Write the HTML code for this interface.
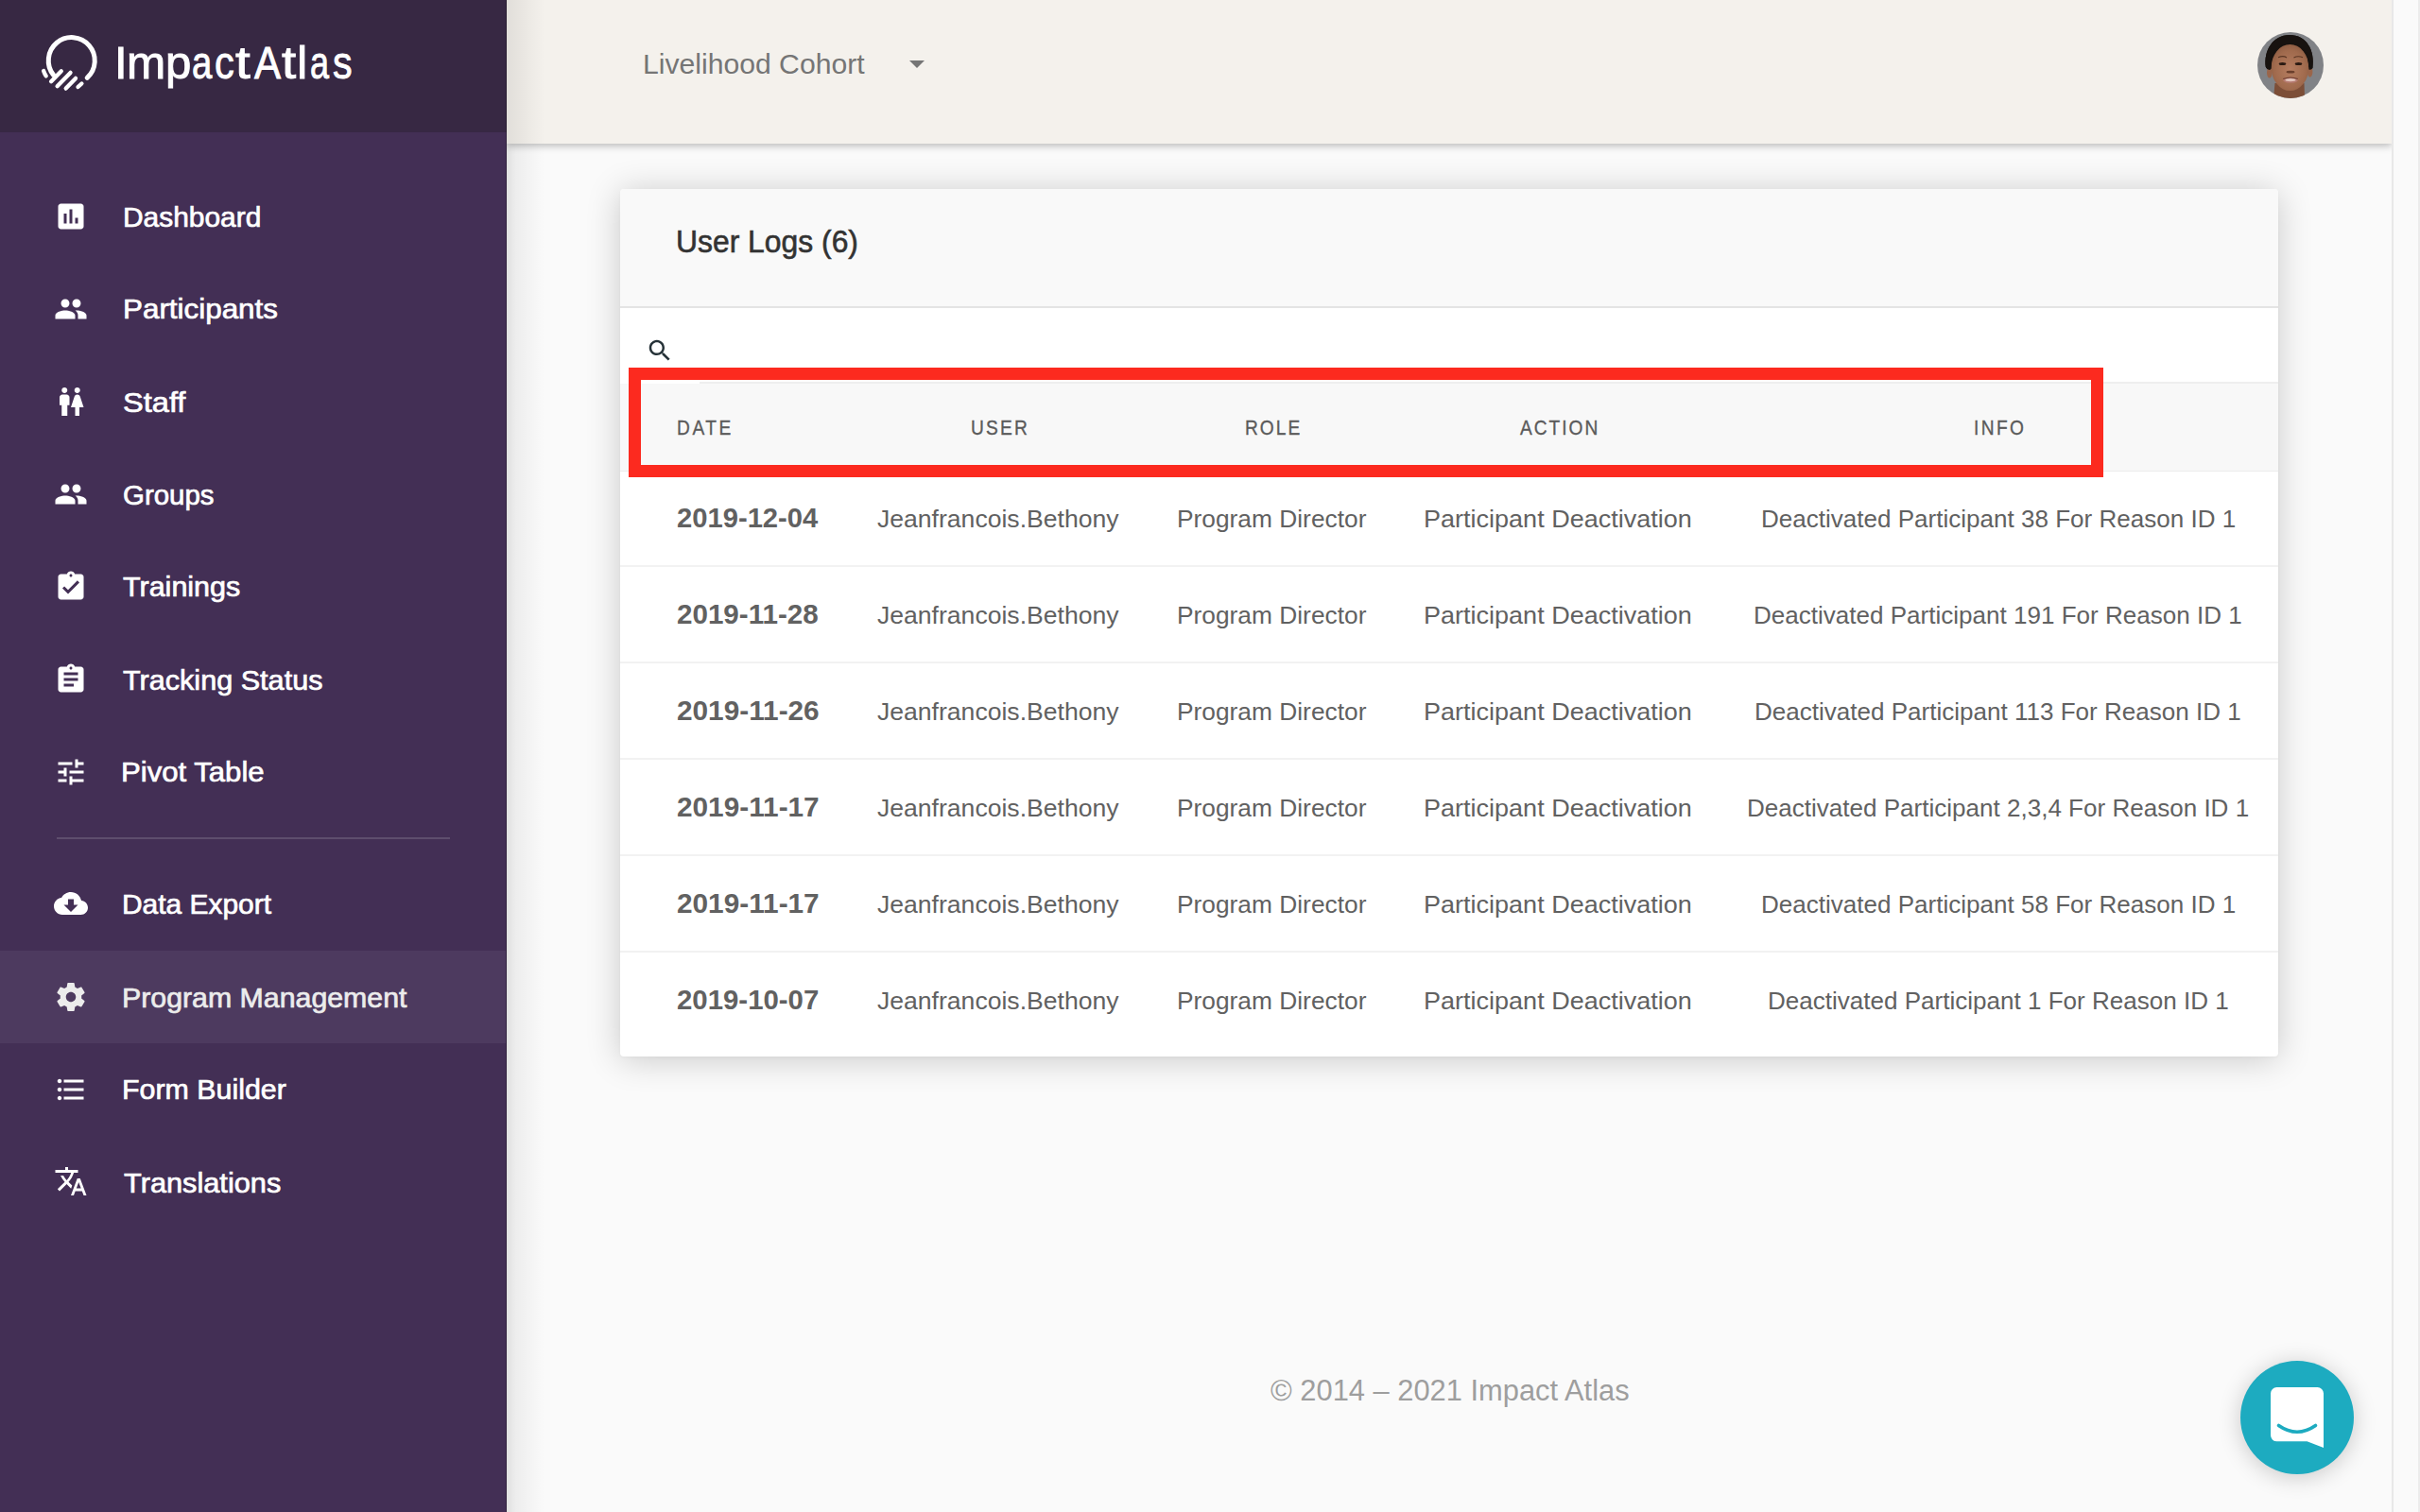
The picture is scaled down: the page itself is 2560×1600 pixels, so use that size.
<!DOCTYPE html>
<html><head><meta charset="utf-8"><title>User Logs</title>
<style>
html,body{margin:0;padding:0;width:2560px;height:1600px;overflow:hidden;background:#fafafa;font-family:"Liberation Sans",sans-serif;}
.a{position:absolute;}
.t{position:absolute;white-space:nowrap;line-height:0;transform-origin:0 0;font-family:"Liberation Sans",sans-serif;}
.ic{position:absolute;left:57px;width:36px;height:36px;}
.ic path{fill:#fff;}
</style></head><body>
<!-- main bg shadow from sidebar -->
<div class="a" style="left:536px;top:0;width:40px;height:1600px;background:linear-gradient(to right,rgba(0,0,0,0.10),rgba(0,0,0,0.05) 25%,rgba(0,0,0,0) 100%);"></div>
<!-- top bar -->
<div class="a" style="left:536px;top:0;width:1994px;height:152px;background:#f4f1ec;box-shadow:0 2px 8px rgba(0,0,0,0.28);"></div>
<div class="a" style="left:536px;top:0;width:40px;height:152px;background:linear-gradient(to right,rgba(0,0,0,0.08),rgba(0,0,0,0) 100%);"></div>
<!-- scrollbar track -->
<div class="a" style="left:2530px;top:0;width:30px;height:1600px;background:#fafafa;border-left:2px solid #e8e8e8;box-sizing:border-box;"></div>
<div class="a" style="left:2558px;top:0;width:2px;height:1600px;background:#ececec;"></div>

<!-- sidebar -->
<div class="a" style="left:0;top:0;width:536px;height:1600px;background:#432f55;"></div>
<div class="a" style="left:0;top:0;width:536px;height:140px;background:#372843;"></div>
<div class="a" style="left:535px;top:0;width:1px;height:1600px;background:rgba(0,0,0,0.25);"></div>
<div class="a" style="left:0;top:1006px;width:535px;height:98px;background:#4d3a5f;"></div>
<div class="a" style="left:60px;top:886px;width:416px;height:2px;background:#5e4e6d;"></div>

<!-- logo -->
<svg class="a" style="left:0;top:0" width="140" height="120" viewBox="0 0 140 120">
 <g fill="none" stroke="#fff" stroke-linecap="round">
  <path d="M56.6 79.4 A24.5 24.5 0 1 1 92.2 82.3" stroke-width="5"/>
  <path d="M46.1 74.9 A31.8 31.8 0 0 0 48.7 80.4" stroke-width="4.3"/>
  <path d="M54.1 86.2 L64.8 75.2" stroke-width="4.3"/>
  <path d="M60.6 91.2 L74.5 76.9" stroke-width="4.3"/>
  <path d="M69.7 93.6 L80 82.9" stroke-width="4.3"/>
  <path d="M82.5 92 L86.4 88.5" stroke-width="4.3"/>
 </g>
</svg>

<!-- sidebar icons -->
<svg class="ic" style="top:210.5px" viewBox="0 0 24 24"><path d="M19 3H5c-1.1 0-2 .9-2 2v14c0 1.1.9 2 2 2h14c1.1 0 2-.9 2-2V5c0-1.1-.9-2-2-2zM9 17H7v-7h2v7zm4 0h-2V7h2v10zm4 0h-2v-4h2v4z"/></svg>
<svg class="ic" style="top:308.5px" viewBox="0 0 24 24"><path d="M16 11c1.66 0 2.99-1.34 2.99-3S17.66 5 16 5c-1.66 0-3 1.34-3 3s1.34 3 3 3zm-8 0c1.66 0 2.99-1.34 2.99-3S9.66 5 8 5C6.34 5 5 6.34 5 8s1.34 3 3 3zm0 2c-2.33 0-7 1.17-7 3.5V19h14v-2.5c0-2.33-4.67-3.5-7-3.5zm8 0c-.29 0-.62.02-.97.05 1.16.84 1.97 1.97 1.97 3.45V19h6v-2.5c0-2.33-4.67-3.5-7-3.5z"/></svg>
<svg class="ic" style="top:406.5px" viewBox="0 0 24 24"><path d="M5.5 22v-7.5H4V9c0-1.1.9-2 2-2h3c1.1 0 2 .9 2 2v5.5H9.5V22h-4zM18 22v-6h3l-2.54-7.63C18.18 7.55 17.42 7 16.56 7h-.12c-.86 0-1.63.55-1.9 1.37L12 16h3v6h3zM7.5 6c1.11 0 2-.89 2-2s-.89-2-2-2-2 .89-2 2 .89 2 2 2zm9 0c1.11 0 2-.89 2-2s-.89-2-2-2-2 .89-2 2 .89 2 2 2z"/></svg>
<svg class="ic" style="top:504.5px" viewBox="0 0 24 24"><path d="M16 11c1.66 0 2.99-1.34 2.99-3S17.66 5 16 5c-1.66 0-3 1.34-3 3s1.34 3 3 3zm-8 0c1.66 0 2.99-1.34 2.99-3S9.66 5 8 5C6.34 5 5 6.34 5 8s1.34 3 3 3zm0 2c-2.33 0-7 1.17-7 3.5V19h14v-2.5c0-2.33-4.67-3.5-7-3.5zm8 0c-.29 0-.62.02-.97.05 1.160.84 1.97 1.97 1.97 3.45V19h6v-2.5c0-2.33-4.67-3.5-7-3.5z"/></svg>
<svg class="ic" style="top:602.5px" viewBox="0 0 24 24"><path d="M19 3h-4.18C14.4 1.84 13.3 1 12 1c-1.3 0-2.4.84-2.82 2H5c-1.1 0-2 .9-2 2v14c0 1.1.9 2 2 2h14c1.1 0 2-.9 2-2V5c0-1.1-.9-2-2-2zm-7 0c.55 0 1 .45 1 1s-.45 1-1 1-1-.45-1-1 .45-1 1-1zm-2 14l-4-4 1.41-1.41L10 14.17l6.59-6.59L18 9l-8 8z"/></svg>
<svg class="ic" style="top:700.5px" viewBox="0 0 24 24"><path d="M19 3h-4.18C14.4 1.84 13.3 1 12 1c-1.3 0-2.4.84-2.82 2H5c-1.1 0-2 .9-2 2v14c0 1.1.9 2 2 2h14c1.1 0 2-.9 2-2V5c0-1.1-.9-2-2-2zm-7 0c.55 0 1 .45 1 1s-.45 1-1 1-1-.45-1-1 .45-1 1-1zm2 14H7v-2h7v2zm3-4H7v-2h10v2zm0-4H7V7h10v2z"/></svg>
<svg class="ic" style="top:798.5px" viewBox="0 0 24 24"><path d="M3 17v2h6v-2H3zM3 5v2h10V5H3zm10 16v-2h8v-2h-8v-2h-2v6h2zM7 9v2H3v2h4v2h2V9H7zm14 4v-2H11v2h10zm-6-4h2V7h4V5h-4V3h-2v6z"/></svg>
<svg class="ic" style="top:938px" viewBox="0 0 24 24"><path d="M19.35 10.04C18.67 6.59 15.64 4 12 4 9.11 4 6.6 5.64 5.35 8.04 2.34 8.36 0 10.91 0 14c0 3.31 2.690 6 6 6h13c2.76 0 5-2.24 5-5 0-2.64-2.05-4.78-4.65-4.960zM17 13l-5 5-5-5h3V9h4v4h3z"/></svg>
<svg class="ic" style="top:1036.5px" viewBox="0 0 24 24"><path style="fill:#ececec" d="M19.43 12.98c.04-.32.07-.64.07-.98s-.03-.66-.07-.98l2.11-1.65c.19-.15.24-.42.12-.64l-2-3.46c-.12-.22-.39-.3-.61-.22l-2.49 1c-.52-.4-1.08-.73-1.69-.98l-.38-2.65C14.46 2.18 14.25 2 14 2h-4c-.25 0-.46.18-.49.42l-.38 2.65c-.61.25-1.17.59-1.69.98l-2.49-1c-.23-.09-.49 0-.61.22l-2 3.46c-.13.22-.07.49.12.64l2.11 1.65c-.04.32-.07.65-.07.98s.03.66.07.98l-2.11 1.65c-.19.15-.24.42-.12.64l2 3.46c.12.22.39.3.61.22l2.49-1c.52.4 1.08.73 1.69.98l.38 2.65c.03.24.24.42.49.42h4c.25 0 .46-.18.49-.42l.38-2.65c.61-.25 1.17-.59 1.69-.98l2.49 1c.23.09.49 0 .61-.22l2-3.46c.12-.22.07-.49-.12-.64l-2.11-1.65zM12 15.5c-1.93 0-3.5-1.57-3.5-3.5s1.57-3.5 3.5-3.5 3.5 1.57 3.5 3.5-1.57 3.5-3.5 3.5z"/></svg>
<svg class="ic" style="top:1134.5px" viewBox="0 0 24 24"><path d="M4 10.5c-.83 0-1.5.67-1.5 1.5s.67 1.5 1.5 1.5 1.5-.67 1.5-1.5-.67-1.5-1.5-1.5zm0-6c-.83 0-1.5.67-1.5 1.5S3.17 7.5 4 7.5 5.5 6.83 5.5 6 4.83 4.5 4 4.5zm0 12c-.83 0-1.5.68-1.5 1.5s.68 1.5 1.5 1.5 1.5-.68 1.5-1.5-.67-1.5-1.5-1.5zM7 19h14v-2H7v2zm0-6h14v-2H7v2zm0-8v2h14V5H7z"/></svg>
<svg class="ic" style="top:1232px" viewBox="0 0 24 24"><path d="M12.87 15.07l-2.54-2.51.03-.03c1.74-1.94 2.98-4.170 3.71-6.53H17V4h-7V2H8v2H1v1.99h11.17C11.5 7.92 10.44 9.75 9 11.35 8.07 10.32 7.3 9.19 6.69 8h-2c.73 1.63 1.73 3.17 2.98 4.56l-5.09 5.02L4 19l5-5 3.11 3.11.76-2.04zM18.5 10h-2L12 22h2l1.12-3h4.75L21 22h2l-4.5-12zm-2.62 7l1.62-4.33L19.12 17h-3.24z"/></svg>

<!-- dropdown arrow -->
<svg class="a" style="left:960px;top:62px" width="20" height="12" viewBox="0 0 20 12"><path d="M2 2 L18 2 L10 10 Z" fill="#757575"/></svg>

<!-- avatar -->
<svg class="a" style="left:2388px;top:34px" width="70" height="70" viewBox="0 0 70 70">
 <defs><clipPath id="cav"><circle cx="35" cy="35" r="35"/></clipPath>
 <radialGradient id="skin" cx="0.5" cy="0.55" r="0.6"><stop offset="0" stop-color="#b57d60"/><stop offset="0.7" stop-color="#a06a4d"/><stop offset="1" stop-color="#8a5a40"/></radialGradient></defs>
 <g clip-path="url(#cav)">
  <rect width="70" height="70" fill="#808286"/>
  <path d="M8.8 37 C6.5 20 16 3 34 3 C52 3 61 19 58.4 38 Q57 40.5 54.4 39.5 L14 39.5 Q11 41 8.8 37 Z" fill="#17120f"/>
  <path d="M17 71 L18.5 54 L49.5 54 L50 71 Z" fill="#7c4e37"/>
  <ellipse cx="12.8" cy="43" rx="2.8" ry="5.5" fill="#9a654a"/>
  <ellipse cx="55.6" cy="42" rx="2.8" ry="5.5" fill="#9a654a"/>
  <ellipse cx="34.5" cy="37.5" rx="19.8" ry="24.5" fill="url(#skin)"/>
  <path d="M8.8 37 C6.5 20 16 3 34 3 C52 3 61 19 58.4 38 Q57 40.5 54.4 39.5 C54 31 53 25 51 21 C47 15 41 12.6 34 12.6 C27 12.6 21 15 18 21 C16 25 14.5 31 14 39.5 Q11 41 8.8 37 Z" fill="#17120f"/>
  <path d="M22 26.8 C25 25.5 29 25.7 31 27 M38.5 27 C41 25.7 45 25.5 48 26.8" stroke="#5a3624" stroke-width="1.2" fill="none"/>
  <ellipse cx="26.5" cy="33.4" rx="3.8" ry="1.5" fill="#2a1a12"/>
  <ellipse cx="43.5" cy="33.4" rx="3.8" ry="1.5" fill="#2a1a12"/>
  <ellipse cx="35" cy="42.2" rx="4.5" ry="1.4" fill="#6a3f2c"/>
  <ellipse cx="35" cy="50.8" rx="7.8" ry="3" fill="#b57a70"/>
  <ellipse cx="35" cy="50.6" rx="5.6" ry="1.6" fill="#e2c4bc"/>
  <path d="M27.2 49.6 Q35 46.3 42.8 49.6" stroke="#6e3e30" stroke-width="1.1" fill="none"/>
 </g>
</svg>

<!-- card -->
<div class="a" style="left:656px;top:200px;width:1754px;height:918px;background:#fff;border-radius:4px;box-shadow:0 3px 36px rgba(0,0,0,0.2),0 1px 3px rgba(0,0,0,0.03);overflow:hidden;">
  <div class="a" style="left:0;top:0;width:1754px;height:124px;background:#f9f9f9;border-bottom:2px solid #e4e4e4;"></div>
  <div class="a" style="left:84px;top:204px;width:1670px;height:2px;background:#eeeeee;"></div>
  <div class="a" style="left:0;top:206px;width:1754px;height:92px;background:#f8f8f8;border-bottom:1px solid #ececec;"></div>
  <div class="a" style="left:0;top:398px;width:1754px;height:2px;background:#f2f2f2;"></div>
  <div class="a" style="left:0;top:500px;width:1754px;height:2px;background:#f2f2f2;"></div>
  <div class="a" style="left:0;top:602px;width:1754px;height:2px;background:#f2f2f2;"></div>
  <div class="a" style="left:0;top:704px;width:1754px;height:2px;background:#f2f2f2;"></div>
  <div class="a" style="left:0;top:806px;width:1754px;height:2px;background:#f2f2f2;"></div>
</div>
<!-- search icon -->
<svg class="a" style="left:683px;top:355.5px" width="30" height="30" viewBox="0 0 24 24"><path fill="#263238" d="M15.5 14h-.79l-.28-.27C15.41 12.59 16 11.11 16 9.5 16 5.91 13.09 3 9.5 3S3 5.91 3 9.5 5.91 16 9.5 16c1.61 0 3.09-.59 4.23-1.57l.27.28v.79l5 4.99L20.49 19l-4.99-5zm-6 0C7.01 14 5 11.99 5 9.5S7.01 5 9.5 5 14 7.01 14 9.5 11.99 14 9.5 14z"/></svg>

<div class="t" style="left:120.95px;top:65.62px;font-size:49px;font-weight:400;color:#ffffff;-webkit-text-stroke:0.9px currentColor;">I</div>
<div class="t" style="left:134.17px;top:65.62px;font-size:49px;font-weight:400;color:#ffffff;transform:scaleX(1.0086);-webkit-text-stroke:0.9px currentColor;">m</div>
<div class="t" style="left:175.29px;top:65.62px;font-size:49px;font-weight:400;color:#ffffff;transform:scaleX(1.0043);-webkit-text-stroke:0.9px currentColor;">p</div>
<div class="t" style="left:202.74px;top:65.62px;font-size:49px;font-weight:400;color:#ffffff;transform:scaleX(0.7808);-webkit-text-stroke:0.9px currentColor;">a</div>
<div class="t" style="left:226.91px;top:65.62px;font-size:49px;font-weight:400;color:#ffffff;transform:scaleX(0.8455);-webkit-text-stroke:0.9px currentColor;">c</div>
<div class="t" style="left:248.90px;top:65.62px;font-size:49px;font-weight:400;color:#ffffff;transform:scaleX(1.1571);-webkit-text-stroke:0.9px currentColor;">t</div>
<div class="t" style="left:268.60px;top:65.62px;font-size:49px;font-weight:400;color:#ffffff;transform:scaleX(0.8576);-webkit-text-stroke:0.9px currentColor;">A</div>
<div class="t" style="left:297.50px;top:65.62px;font-size:49px;font-weight:400;color:#ffffff;transform:scaleX(1.1143);-webkit-text-stroke:0.9px currentColor;">t</div>
<div class="t" style="left:314.25px;top:65.62px;font-size:49px;font-weight:400;color:#ffffff;-webkit-text-stroke:0.9px currentColor;">l</div>
<div class="t" style="left:327.83px;top:65.62px;font-size:49px;font-weight:400;color:#ffffff;transform:scaleX(0.7346);-webkit-text-stroke:0.9px currentColor;">a</div>
<div class="t" style="left:351.66px;top:65.62px;font-size:49px;font-weight:400;color:#ffffff;transform:scaleX(0.8409);-webkit-text-stroke:0.9px currentColor;">s</div>
<div class="t" style="left:129.63px;top:229.50px;font-size:30.3px;font-weight:400;color:#ffffff;transform:scaleX(0.9869);-webkit-text-stroke:0.7px currentColor;">Dashboard</div>
<div class="t" style="left:129.53px;top:327.30px;font-size:30.3px;font-weight:400;color:#ffffff;transform:scaleX(1.0359);-webkit-text-stroke:0.7px currentColor;">Participants</div>
<div class="t" style="left:130.02px;top:425.50px;font-size:30.3px;font-weight:400;color:#ffffff;transform:scaleX(1.0754);-webkit-text-stroke:0.7px currentColor;">Staff</div>
<div class="t" style="left:129.93px;top:523.50px;font-size:30.3px;font-weight:400;color:#ffffff;transform:scaleX(0.9714);-webkit-text-stroke:0.7px currentColor;">Groups</div>
<div class="t" style="left:130.30px;top:621.30px;font-size:30.3px;font-weight:400;color:#ffffff;transform:scaleX(1.0065);-webkit-text-stroke:0.7px currentColor;">Trainings</div>
<div class="t" style="left:130.30px;top:719.80px;font-size:30.3px;font-weight:400;color:#ffffff;transform:scaleX(1.0100);-webkit-text-stroke:0.7px currentColor;">Tracking Status</div>
<div class="t" style="left:128.25px;top:817.30px;font-size:30.3px;font-weight:400;color:#ffffff;transform:scaleX(1.0269);-webkit-text-stroke:0.7px currentColor;">Pivot Table</div>
<div class="t" style="left:129.12px;top:957.30px;font-size:30.3px;font-weight:400;color:#ffffff;transform:scaleX(0.9880);-webkit-text-stroke:0.7px currentColor;">Data Export</div>
<div class="t" style="left:129.00px;top:1055.90px;font-size:30.3px;font-weight:400;color:#ececec;-webkit-text-stroke:0.7px currentColor;">Program Management</div>
<div class="t" style="left:129.00px;top:1153.30px;font-size:30.3px;font-weight:400;color:#ffffff;transform:scaleX(1.0023);-webkit-text-stroke:0.7px currentColor;">Form Builder</div>
<div class="t" style="left:131.00px;top:1251.70px;font-size:30.3px;font-weight:400;color:#ffffff;transform:scaleX(1.0147);-webkit-text-stroke:0.7px currentColor;">Translations</div>
<div class="t" style="left:680.21px;top:67.50px;font-size:30.3px;font-weight:400;color:#757575;transform:scaleX(0.9949);">Livelihood Cohort</div>
<div class="t" style="left:715.34px;top:256.40px;font-size:32.6px;font-weight:400;color:#333333;transform:scaleX(0.9778);-webkit-text-stroke:0.6px currentColor;">User Logs (6)</div>
<div class="t" style="left:716.43px;top:452.98px;font-size:22px;font-weight:400;color:#5b5b5b;transform:scaleX(0.8700);letter-spacing:2.969px;-webkit-text-stroke:0.35px currentColor;">DATE</div>
<div class="t" style="left:1026.53px;top:452.98px;font-size:22px;font-weight:400;color:#5b5b5b;transform:scaleX(0.8700);letter-spacing:2.556px;-webkit-text-stroke:0.35px currentColor;">USER</div>
<div class="t" style="left:1316.93px;top:452.98px;font-size:22px;font-weight:400;color:#5b5b5b;transform:scaleX(0.8700);letter-spacing:2.314px;-webkit-text-stroke:0.35px currentColor;">ROLE</div>
<div class="t" style="left:1607.50px;top:452.98px;font-size:22px;font-weight:400;color:#5b5b5b;transform:scaleX(0.8700);letter-spacing:2.290px;-webkit-text-stroke:0.35px currentColor;">ACTION</div>
<div class="t" style="left:2087.86px;top:452.98px;font-size:22px;font-weight:400;color:#5b5b5b;transform:scaleX(0.8700);letter-spacing:2.759px;-webkit-text-stroke:0.35px currentColor;">INFO</div>
<div class="t" style="left:715.80px;top:547.85px;font-size:29.3px;font-weight:700;color:#616161;transform:scaleX(0.9960);">2019-12-04</div>
<div class="t" style="left:928.29px;top:548.85px;font-size:26.4px;font-weight:400;color:#616161;transform:scaleX(1.0067);">Jeanfrancois.Bethony</div>
<div class="t" style="left:1245.01px;top:548.85px;font-size:26.4px;font-weight:400;color:#616161;transform:scaleX(0.9975);">Program Director</div>
<div class="t" style="left:1506.35px;top:548.85px;font-size:26.4px;font-weight:400;color:#616161;transform:scaleX(1.0237);">Participant Deactivation</div>
<div class="t" style="left:1862.63px;top:548.85px;font-size:26.4px;font-weight:400;color:#616161;transform:scaleX(0.9866);">Deactivated Participant 38 For Reason ID 1</div>
<div class="t" style="left:715.79px;top:649.85px;font-size:29.3px;font-weight:700;color:#616161;transform:scaleX(1.0095);">2019-11-28</div>
<div class="t" style="left:928.29px;top:650.85px;font-size:26.4px;font-weight:400;color:#616161;transform:scaleX(1.0067);">Jeanfrancois.Bethony</div>
<div class="t" style="left:1245.01px;top:650.85px;font-size:26.4px;font-weight:400;color:#616161;transform:scaleX(0.9975);">Program Director</div>
<div class="t" style="left:1506.35px;top:650.85px;font-size:26.4px;font-weight:400;color:#616161;transform:scaleX(1.0237);">Participant Deactivation</div>
<div class="t" style="left:1855.23px;top:650.85px;font-size:26.4px;font-weight:400;color:#616161;transform:scaleX(0.9866);">Deactivated Participant 191 For Reason ID 1</div>
<div class="t" style="left:715.78px;top:751.85px;font-size:29.3px;font-weight:700;color:#616161;transform:scaleX(1.0164);">2019-11-26</div>
<div class="t" style="left:928.29px;top:752.85px;font-size:26.4px;font-weight:400;color:#616161;transform:scaleX(1.0067);">Jeanfrancois.Bethony</div>
<div class="t" style="left:1245.01px;top:752.85px;font-size:26.4px;font-weight:400;color:#616161;transform:scaleX(0.9975);">Program Director</div>
<div class="t" style="left:1506.35px;top:752.85px;font-size:26.4px;font-weight:400;color:#616161;transform:scaleX(1.0237);">Participant Deactivation</div>
<div class="t" style="left:1856.21px;top:752.85px;font-size:26.4px;font-weight:400;color:#616161;transform:scaleX(0.9866);">Deactivated Participant 113 For Reason ID 1</div>
<div class="t" style="left:715.78px;top:853.85px;font-size:29.3px;font-weight:700;color:#616161;transform:scaleX(1.0164);">2019-11-17</div>
<div class="t" style="left:928.29px;top:854.85px;font-size:26.4px;font-weight:400;color:#616161;transform:scaleX(1.0067);">Jeanfrancois.Bethony</div>
<div class="t" style="left:1245.01px;top:854.85px;font-size:26.4px;font-weight:400;color:#616161;transform:scaleX(0.9975);">Program Director</div>
<div class="t" style="left:1506.35px;top:854.85px;font-size:26.4px;font-weight:400;color:#616161;transform:scaleX(1.0237);">Participant Deactivation</div>
<div class="t" style="left:1848.32px;top:854.85px;font-size:26.4px;font-weight:400;color:#616161;transform:scaleX(0.9866);">Deactivated Participant 2,3,4 For Reason ID 1</div>
<div class="t" style="left:715.78px;top:955.85px;font-size:29.3px;font-weight:700;color:#616161;transform:scaleX(1.0164);">2019-11-17</div>
<div class="t" style="left:928.29px;top:956.85px;font-size:26.4px;font-weight:400;color:#616161;transform:scaleX(1.0067);">Jeanfrancois.Bethony</div>
<div class="t" style="left:1245.01px;top:956.85px;font-size:26.4px;font-weight:400;color:#616161;transform:scaleX(0.9975);">Program Director</div>
<div class="t" style="left:1506.35px;top:956.85px;font-size:26.4px;font-weight:400;color:#616161;transform:scaleX(1.0237);">Participant Deactivation</div>
<div class="t" style="left:1862.63px;top:956.85px;font-size:26.4px;font-weight:400;color:#616161;transform:scaleX(0.9866);">Deactivated Participant 58 For Reason ID 1</div>
<div class="t" style="left:715.80px;top:1057.85px;font-size:29.3px;font-weight:700;color:#616161;transform:scaleX(1.0027);">2019-10-07</div>
<div class="t" style="left:928.29px;top:1058.85px;font-size:26.4px;font-weight:400;color:#616161;transform:scaleX(1.0067);">Jeanfrancois.Bethony</div>
<div class="t" style="left:1245.01px;top:1058.85px;font-size:26.4px;font-weight:400;color:#616161;transform:scaleX(0.9975);">Program Director</div>
<div class="t" style="left:1506.35px;top:1058.85px;font-size:26.4px;font-weight:400;color:#616161;transform:scaleX(1.0237);">Participant Deactivation</div>
<div class="t" style="left:1870.03px;top:1058.85px;font-size:26.4px;font-weight:400;color:#616161;transform:scaleX(0.9866);">Deactivated Participant 1 For Reason ID 1</div>
<div class="t" style="left:1344.00px;top:1472.26px;font-size:31px;font-weight:400;color:#9e9e9e;transform:scaleX(0.9955);">© 2014 – 2021 Impact Atlas</div>

<!-- red annotation box -->
<div class="a" style="left:665px;top:388.5px;width:1560px;height:116px;border:13px solid #fc2a1f;box-sizing:border-box;"></div>

<!-- chat button -->
<div class="a" style="left:2370px;top:1440px;width:120px;height:120px;border-radius:50%;background:#1dabc0;box-shadow:0 3px 24px rgba(0,0,0,0.2);"></div>
<svg class="a" style="left:2370px;top:1440px" width="120" height="120" viewBox="0 0 120 120">
 <path d="M38.5 28 H81.5 A6.5 6.5 0 0 1 88 34.5 V92 L70.5 85.3 H38.5 A6.5 6.5 0 0 1 32 78.8 V34.5 A6.5 6.5 0 0 1 38.5 28 Z" fill="#fff"/>
 <path d="M40.5 68.5 Q60 82 79.5 68.5" fill="none" stroke="#1dabc0" stroke-width="3.6" stroke-linecap="round"/>
</svg>
</body></html>
